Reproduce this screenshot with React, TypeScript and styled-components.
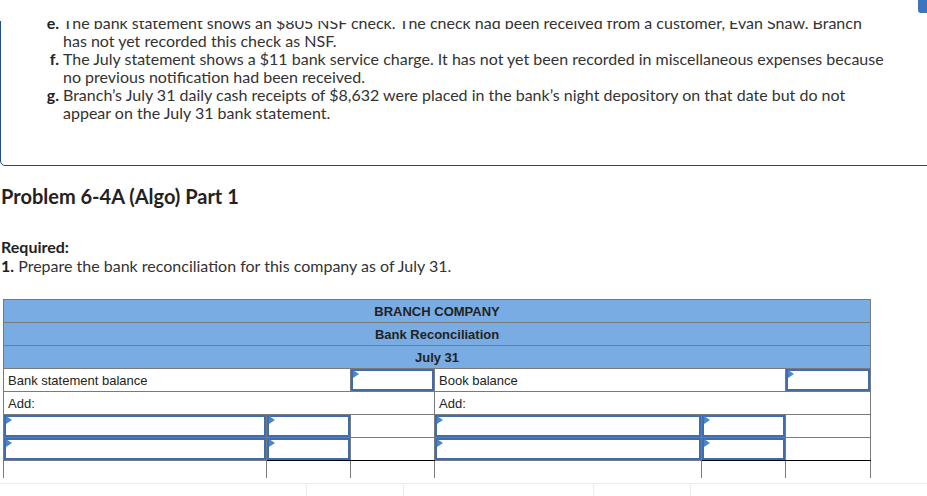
import React from "react";
import styled, { createGlobalStyle } from "styled-components";

const Global = createGlobalStyle`
  html, body { margin: 0; padding: 0; background: #fff; }
  body { font-family: "Lato", "Liberation Sans", sans-serif; color: #333; }
`;

const Root = styled.div`
  height: 496px;
  display: flex;
  flex-direction: column;
  overflow: hidden;
`;

const TopBar = styled.div`
  height: 21px;
  flex: none;
  display: flex;
  justify-content: flex-end;
  background: #fff;
`;

const CornerTab = styled.div`
  width: 9px;
  height: 13px;
  background: #3c74bd;
  border-bottom-left-radius: 3px;
`;

const Viewport = styled.div`
  flex: 1;
  overflow: hidden;
`;

const Card = styled.div`
  margin: -8px -20px 0 0;
  border: 1px solid #1d4e89;
  border-radius: 0 0 0 5px;
  padding: 0 0 43px 0;
`;

const ItemList = styled.div`
  display: grid;
  grid-template-columns: 58px 1fr;
  column-gap: 4px;
  font-size: 16px;
  line-height: 18px;
  color: #333;
`;

const Label = styled.span`
  text-align: right;
  font-weight: 700;
  color: #222;
`;

const ItemText = styled.span`
  white-space: nowrap;
`;

const Heading = styled.h2`
  margin: 19px 0 0 1px;
  font-size: 20px;
  line-height: 22px;
  font-weight: 700;
  color: #222;
`;

const Required = styled.div`
  margin: 30px 0 0 1px;
  font-size: 16px;
  line-height: 19px;
  color: #333;
`;

const Strong = styled.div`
  font-weight: 700;
  color: #222;
`;

const Num = styled.b`
  color: #222;
`;

const Table = styled.table`
  margin: 24px 0 0 3px;
  border-collapse: collapse;
  table-layout: fixed;
  width: 867px;
  font-family: "Liberation Sans", Arial, sans-serif;
  font-size: 13px;
  color: #222;
`;

const HeadCell = styled.td`
  background: #79ace3;
  border: 1px solid #7a7a7a;
  height: 22px;
  padding: 0;
  text-align: center;
  font-weight: 700;
  color: #222;
`;

const Cell = styled.td<{ $sum?: boolean }>`
  border: 1px solid #7a7a7a;
  ${(p) => (p.$sum ? "border-bottom: 1px solid #000;" : "")}
  height: 22px;
  padding: 0 4px;
  vertical-align: middle;
  white-space: nowrap;
`;

const InputCell = styled.td<{ $sum?: boolean }>`
  border: 1px solid #7a7a7a;
  ${(p) => (p.$sum ? "border-bottom: 1px solid #000;" : "")}
  height: 22px;
  padding: 0;
`;

const InputBox = styled.div`
  position: relative;
  height: 22px;
  border: 2px solid #3d6db0;
  box-sizing: border-box;
  background: #fff;
`;

const Flag = styled.span`
  position: absolute;
  left: 0;
  top: 0;
  width: 0;
  height: 0;
  border-top: 4px solid transparent;
  border-bottom: 4px solid transparent;
  border-left: 6px solid #4a86d0;
  margin-top: -1px;
`;

const Footer = styled.div`
  height: 18px;
  flex: none;
  background: #fff;
  padding-top: 5px;
  box-sizing: border-box;
`;

const FooterRow = styled.div`
  height: 100%;
  display: flex;
  border-top: 1px solid #ececec;
`;

const FooterCell = styled.div<{ $w: number; $first?: boolean }>`
  width: ${(p) => p.$w}px;
  flex: none;
  ${(p) => (p.$first ? "" : "border-left: 1px solid #ececec;")}
  box-sizing: border-box;
`;

const Input = ({ sum }: { sum?: boolean }) => (
  <InputCell $sum={sum}>
    <InputBox>
      <Flag />
    </InputBox>
  </InputCell>
);

export default function App() {
  return (
    <Root>
      <Global />
      <TopBar>
        <CornerTab />
      </TopBar>
      <Viewport>
        <Card>
          <ItemList>
            <Label>e.</Label>
            <ItemText>
              The bank statement shows an $805 NSF check. The check had been received from a customer, Evan Shaw. Branch
              <br />
              has not yet recorded this check as NSF.
            </ItemText>
            <Label>f.</Label>
            <ItemText>
              The July statement shows a $11 bank service charge. It has not yet been recorded in miscellaneous expenses because
              <br />
              no previous notification had been received.
            </ItemText>
            <Label>g.</Label>
            <ItemText>
              Branch’s July 31 daily cash receipts of $8,632 were placed in the bank’s night depository on that date but do not
              <br />
              appear on the July 31 bank statement.
            </ItemText>
          </ItemList>
        </Card>
        <Heading>Problem 6-4A (Algo) Part 1</Heading>
        <Required>
          <Strong>Required:</Strong>
          <div>
            <Num>1.</Num> Prepare the bank reconciliation for this company as of July 31.
          </div>
        </Required>
        <Table>
          <colgroup>
            <col style={{ width: 263 }} />
            <col style={{ width: 84 }} />
            <col style={{ width: 84 }} />
            <col style={{ width: 267 }} />
            <col style={{ width: 84 }} />
            <col style={{ width: 85 }} />
          </colgroup>
          <tbody>
            <tr>
              <HeadCell colSpan={6}>BRANCH COMPANY</HeadCell>
            </tr>
            <tr>
              <HeadCell colSpan={6}>Bank Reconciliation</HeadCell>
            </tr>
            <tr>
              <HeadCell colSpan={6}>July 31</HeadCell>
            </tr>
            <tr>
              <Cell colSpan={2}>Bank statement balance</Cell>
              <Input />
              <Cell colSpan={2}>Book balance</Cell>
              <Input />
            </tr>
            <tr>
              <Cell colSpan={3}>Add:</Cell>
              <Cell colSpan={3}>Add:</Cell>
            </tr>
            <tr>
              <Input />
              <Input />
              <Cell />
              <Input />
              <Input />
              <Cell />
            </tr>
            <tr>
              <Input />
              <Input sum />
              <Cell $sum />
              <Input />
              <Input sum />
              <Cell $sum />
            </tr>
            <tr>
              <Cell />
              <Cell />
              <Cell />
              <Cell />
              <Cell />
              <Cell />
            </tr>
          </tbody>
        </Table>
      </Viewport>
      <Footer>
        <FooterRow>
          <FooterCell $w={306} $first />
          <FooterCell $w={97} />
          <FooterCell $w={190} />
          <FooterCell $w={97} />
          <FooterCell $w={237} />
        </FooterRow>
      </Footer>
    </Root>
  );
}
